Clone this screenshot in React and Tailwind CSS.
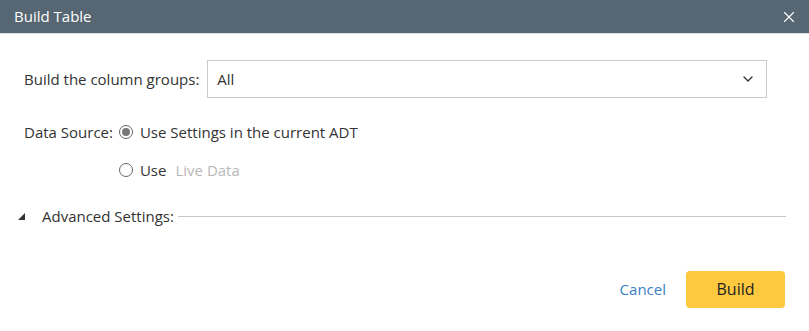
import { ChevronDown, X } from "lucide-react";

export default function App() {
  return (
    <div className="w-[809px] h-[331px] bg-white text-[15px] text-[#333] font-['Open_Sans',sans-serif]">
      {/* header */}
      <div className="h-[34px] bg-[#566672] flex items-center justify-between pl-[14px] pr-[11px] border-b border-[#dfe3e6]">
        <span className="text-white text-[15px]">Build Table</span>
        <X size={18} strokeWidth={1.5} className="text-white" />
      </div>

      <div className="pl-[24px] pr-[42px]">
        <div className="flex items-center mt-[26px]">
          <span className="mr-[8px]">Build the column groups:</span>
          <div className="flex-1 h-[38px] border border-[#cccccc] flex items-center justify-between pl-[9px] pr-[10px]">
            <span>All</span>
            <ChevronDown size={16} strokeWidth={2} className="text-[#333]" />
          </div>
        </div>

        <div className="flex mt-[23px]">
          <span className="mr-[6px] leading-[22px]">Data Source:</span>
          <div className="flex flex-col gap-[16px]">
            <label className="flex items-center leading-[22px]">
              <span className="w-[14px] h-[14px] rounded-full border border-[#666] flex items-center justify-center mr-[7px]">
                <span className="w-[8px] h-[8px] rounded-full bg-[#777]"></span>
              </span>
              Use Settings in the current ADT
            </label>
            <label className="flex items-center leading-[22px]">
              <span className="w-[14px] h-[14px] rounded-full border border-[#666] mr-[7px]"></span>
              Use
              <span className="ml-[9px] text-[15px] text-[#b8b8b8]">Live Data</span>
            </label>
          </div>
        </div>
      </div>

      <div className="flex items-center pl-[18px] pr-[23px] mt-[24px]">
        <svg width="7" height="7" viewBox="0 0 7 7" className="mr-[17px]">
          <polygon points="7,0 7,7 0,7" fill="#333" />
        </svg>
        <span>Advanced Settings:</span>
        <div className="flex-1 h-px bg-[#c8c8c8] ml-[4px]"></div>
      </div>

      <div className="flex items-center justify-end pr-[24px] mt-[43px]">
        <button className="text-[#3b80c4] text-[15px] mr-[20px]">Cancel</button>
        <button className="w-[99px] h-[37px] rounded-[4px] bg-[#fec93f] text-[16px] text-[#222]">Build</button>
      </div>
    </div>
  );
}
